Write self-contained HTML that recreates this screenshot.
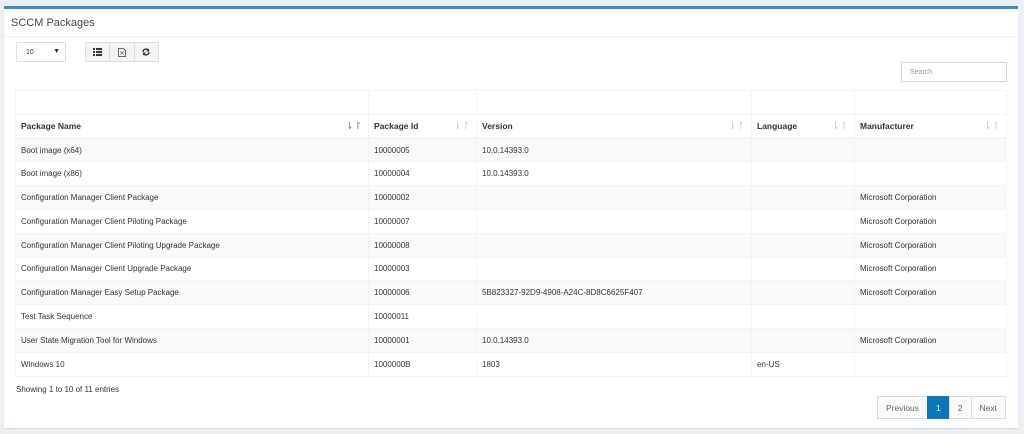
<!DOCTYPE html>
<html><head><style>
*{box-sizing:border-box;margin:0;padding:0}
body{width:1024px;height:434px;background:#ecf0f5;font-family:"Liberation Sans",sans-serif;color:#333;overflow:hidden;position:relative}
.panel{position:absolute;left:4px;top:6px;width:1014px;height:422px;background:#fff;border-top:3px solid #3c8dbc;box-shadow:0 1px 1px rgba(0,0,0,.1)}
.title{position:absolute;left:7px;top:8px;font-size:11px;color:#444}
.hr{position:absolute;left:0;top:27px;width:100%;border-top:1px solid #f0f0f0}
.sel{position:absolute;left:12px;top:33px;width:50px;height:20px;border:1px solid #ddd;border-radius:2px;font-size:7px;padding:6px 0 0 9px}
.sel:after{content:"▼";position:absolute;right:5px;top:5px;font-size:7px}
.btns{position:absolute;left:81px;top:33px;height:20px;width:74px;border:1px solid #ddd;border-radius:2px;background:#f4f4f4;display:flex}
.btns div{flex:1;border-right:1px solid #ddd;display:flex;align-items:center;justify-content:center}
.btns div:last-child{border-right:none}
.search{position:absolute;left:897px;top:53px;width:106px;height:20px;border:1px solid #d2d6de;font-size:7px;color:#999;padding:6px 0 0 8px}
table{position:absolute;left:11px;top:81px;border-collapse:collapse;font-size:8px;table-layout:fixed}
td,th{border:1px solid #f4f4f4;height:23.8px;padding:0 5px;text-align:left;white-space:nowrap}
th{font-weight:bold;font-size:8.5px;position:relative;border-bottom:2px solid #f4f4f4}
th span{position:absolute;right:6px;top:6px;color:#ccc;font-size:10px;font-weight:normal}
tbody tr:nth-child(odd) td{background:#f9f9f9}
.info{position:absolute;left:12px;top:376px;font-size:8px}
.pag{position:absolute;right:12px;top:387px;display:flex;font-size:8.5px;height:23px}
.pag div{border:1px solid #ddd;margin-left:-1px;padding:0 8px;display:flex;align-items:center;color:#666;background:#fafafa}
.pag .a{background:#0b79b9;border-color:#0b79b9;color:#fff}
</style></head><body>
<div class="panel">
<div class="title">SCCM Packages</div>
<div class="hr"></div>
<div class="sel">10</div>
<div class="btns">
<div><svg width="9" height="8"><g fill="#333"><rect x="0" y="0" width="2" height="2"/><rect x="3" y="0" width="6" height="2"/><rect x="0" y="3" width="2" height="2"/><rect x="3" y="3" width="6" height="2"/><rect x="0" y="6" width="2" height="2"/><rect x="3" y="6" width="6" height="2"/></g></svg></div>
<div><svg width="8" height="9"><path d="M0.5 0.5h5l2 2v6h-7z" fill="none" stroke="#666"/><path d="M2.5 3.5l3 3M5.5 3.5l-3 3" stroke="#666" stroke-width=".8"/></svg></div>
<div><svg width="8" height="8"><path d="M1 4a3 3 0 0 1 5.5-1.6M7 4a3 3 0 0 1-5.5 1.6" fill="none" stroke="#333" stroke-width="1.4"/><path d="M7 0.5v3h-3zM1 7.5v-3h3z" fill="#333"/></svg></div>
</div>
<div class="search">Search</div>
<table>
<colgroup><col style="width:353px"><col style="width:108px"><col style="width:275px"><col style="width:103px"><col style="width:152px"></colgroup>
<thead>
<tr><td style="background:#fff"></td><td style="background:#fff"></td><td style="background:#fff"></td><td style="background:#fff"></td><td style="background:#fff"></td></tr>
<tr><th>Package Name<span style="color:#888">⇂↾</span></th><th>Package Id<span>⇂↾</span></th><th>Version<span>⇂↾</span></th><th>Language<span>⇂↾</span></th><th>Manufacturer<span>⇂↾</span></th></tr>
</thead>
<tbody>
<tr><td>Boot image (x64)</td><td>10000005</td><td>10.0.14393.0</td><td></td><td></td></tr>
<tr><td>Boot image (x86)</td><td>10000004</td><td>10.0.14393.0</td><td></td><td></td></tr>
<tr><td>Configuration Manager Client Package</td><td>10000002</td><td></td><td></td><td>Microsoft Corporation</td></tr>
<tr><td>Configuration Manager Client Piloting Package</td><td>10000007</td><td></td><td></td><td>Microsoft Corporation</td></tr>
<tr><td>Configuration Manager Client Piloting Upgrade Package</td><td>10000008</td><td></td><td></td><td>Microsoft Corporation</td></tr>
<tr><td>Configuration Manager Client Upgrade Package</td><td>10000003</td><td></td><td></td><td>Microsoft Corporation</td></tr>
<tr><td>Configuration Manager Easy Setup Package</td><td>10000006</td><td>5B823327-92D9-4908-A24C-8D8C6625F407</td><td></td><td>Microsoft Corporation</td></tr>
<tr><td>Test Task Sequence</td><td>10000011</td><td></td><td></td><td></td></tr>
<tr><td>User State Migration Tool for Windows</td><td>10000001</td><td>10.0.14393.0</td><td></td><td>Microsoft Corporation</td></tr>
<tr><td>Windows 10</td><td>1000000B</td><td>1803</td><td>en-US</td><td></td></tr>
</tbody>
</table>
<div class="info">Showing 1 to 10 of 11 entries</div>
<div class="pag"><div>Previous</div><div class="a">1</div><div>2</div><div>Next</div></div>
</div>
</body></html>
